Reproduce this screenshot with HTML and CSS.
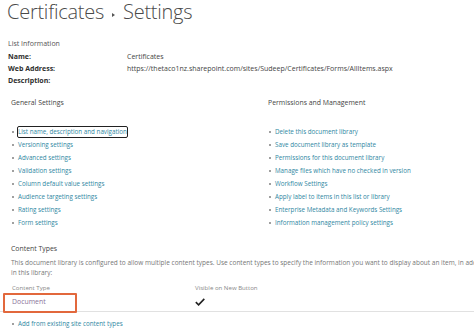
FILE: index.html
```html
<!DOCTYPE html>
<html>
<head>
<meta charset="utf-8">
<link rel="stylesheet" href="styles.css">
</head>
<body>
<div class="page">
  <h1 class="title"><span>Certificates</span><span class="sep"></span><span>Settings</span></h1>

  <section class="info">
    <div class="info-head">List Information</div>
    <div class="info-row"><span class="label">Name:</span><span class="value">Certificates</span></div>
    <div class="info-row"><span class="label">Web Address:</span><span class="value">https://thetaco1nz.sharepoint.com/sites/Sudeep/Certificates/Forms/AllItems.aspx</span></div>
    <div class="info-row"><span class="label">Description:</span><span class="value"></span></div>
  </section>

  <section class="settings">
    <div class="col col-left">
      <div class="col-head">General Settings</div>
      <ul class="links">
        <li><a class="focused">List name, description and navigation</a></li>
        <li><a>Versioning settings</a></li>
        <li><a>Advanced settings</a></li>
        <li><a>Validation settings</a></li>
        <li><a>Column default value settings</a></li>
        <li><a>Audience targeting settings</a></li>
        <li><a>Rating settings</a></li>
        <li><a>Form settings</a></li>
      </ul>
    </div>
    <div class="col col-right">
      <div class="col-head">Permissions and Management</div>
      <ul class="links">
        <li><a>Delete this document library</a></li>
        <li><a>Save document library as template</a></li>
        <li><a>Permissions for this document library</a></li>
        <li><a>Manage files which have no checked in version</a></li>
        <li><a>Workflow Settings</a></li>
        <li><a>Apply label to items in this list or library</a></li>
        <li><a>Enterprise Metadata and Keywords Settings</a></li>
        <li><a>Information management policy settings</a></li>
      </ul>
    </div>
  </section>

  <section class="ctypes">
    <div class="col-head">Content Types</div>
    <p class="ct-desc">This document library is configured to allow multiple content types. Use content types to specify the information you want to display about an item, in addition to its policies, workflows, or other behavior. The following content types are currently available<br>in this library:</p>
    <div class="ct-table">
      <div class="ct-row ct-headrow">
        <span class="ct-name">Content Type</span>
        <span class="ct-vis">Visible on New Button</span>
      </div>
      <div class="ct-row ct-item">
        <span class="ct-name"><span class="doc">Document</span><span class="highlight"></span></span>
        <span class="ct-vis"><svg class="check" width="10" height="8" viewBox="0 0 10 8"><path d="M0.8 4.2 L3.6 6.9 L9.3 0.9" fill="none" stroke="#222" stroke-width="1.6"/></svg></span>
      </div>
    </div>
    <ul class="links add">
      <li><a>Add from existing site content types</a></li>
    </ul>
  </section>
</div>
</body>
</html>
```

FILE: styles.css
```css
html, body {
  margin: 0;
  padding: 0;
  background: #ffffff;
  overflow: hidden;
}
body {
  font-family: "Open Sans", "Noto Sans", sans-serif;
  font-size: 7px;
  color: #444;
}
.page {
  width: 474px;
  height: 335px;
  overflow: hidden;
  position: relative;
}
.title {
  margin: 0;
  padding-left: 7px;
  height: 24px;
  font-size: 20px;
  line-height: 24px;
  font-weight: 300;
  color: #4a4a4a;
  display: flex;
  align-items: center;
  white-space: nowrap;
  letter-spacing: -0.25px;
}
.sep {
  display: inline-block;
  width: 0;
  height: 0;
  border-top: 2px solid transparent;
  border-bottom: 2px solid transparent;
  border-left: 3px solid #555;
  margin: 5px 8px 0 8px;
}
.info {
  margin-top: 14px;
  padding-left: 8px;
}
.info-head {
  line-height: 12px;
  color: #555;
  margin-bottom: 1px;
}
.info-row {
  display: flex;
  line-height: 12px;
  height: 12px;
  white-space: nowrap;
}
.label {
  width: 119px;
  font-weight: 700;
  color: #2e2e2e;
}
.value {
  color: #444;
}
.settings {
  display: flex;
  margin-top: 10px;
}
.col-left {
  width: 257px;
  padding-left: 11px;
}
.col-right {
  flex: 1;
}
.col-head {
  line-height: 12px;
  font-size: 6.9px;
  color: #444;
  white-space: nowrap;
}
.links {
  list-style: none;
  margin: 16px 0 0 0;
  padding: 0;
  font-size: 6.25px;
}
.links li {
  display: flex;
  align-items: center;
  height: 13px;
  line-height: 13px;
  white-space: nowrap;
}
.links li::before {
  content: "";
  width: 2px;
  height: 2px;
  background: #a0a0a0;
  margin: 0 4px 0 1px;
  flex: none;
}
.links a {
  color: #2f87a2;
  text-decoration: none;
  line-height: 10px;
}
.links a.focused {
  outline: 1px solid #222;
  outline-offset: 0;
  border-radius: 1px;
}
.ctypes {
  margin-top: 14px;
  padding-left: 11px;
}
.ct-desc {
  margin: 3px 0 0 0;
  line-height: 10px;
  font-size: 6.5px;
  color: #777;
  white-space: nowrap;
}
.ct-table {
  margin-top: 4px;
  margin-left: -11px;
  width: 520px;
}
.ct-row {
  display: flex;
  padding-left: 12px;
}
.ct-headrow {
  line-height: 12px;
  height: 12px;
  color: #888;
  font-size: 6.1px;
}
.ct-item {
  height: 12px;
  line-height: 12px;
  padding-bottom: 3px;
  border-bottom: 1px solid #e1e1e1;
  margin-top: 2px;
}
.ct-name {
  width: 183px;
  position: relative;
}
.doc {
  color: #8a7399;
  font-size: 6.9px;
}
.highlight {
  position: absolute;
  left: -9px;
  top: -3px;
  width: 70px;
  height: 16px;
  border: 2px solid #e2683c;
  border-radius: 1px;
}
.check {
  display: block;
  margin-top: 2px;
}
.links.add {
  margin-top: 5px;
}
```
